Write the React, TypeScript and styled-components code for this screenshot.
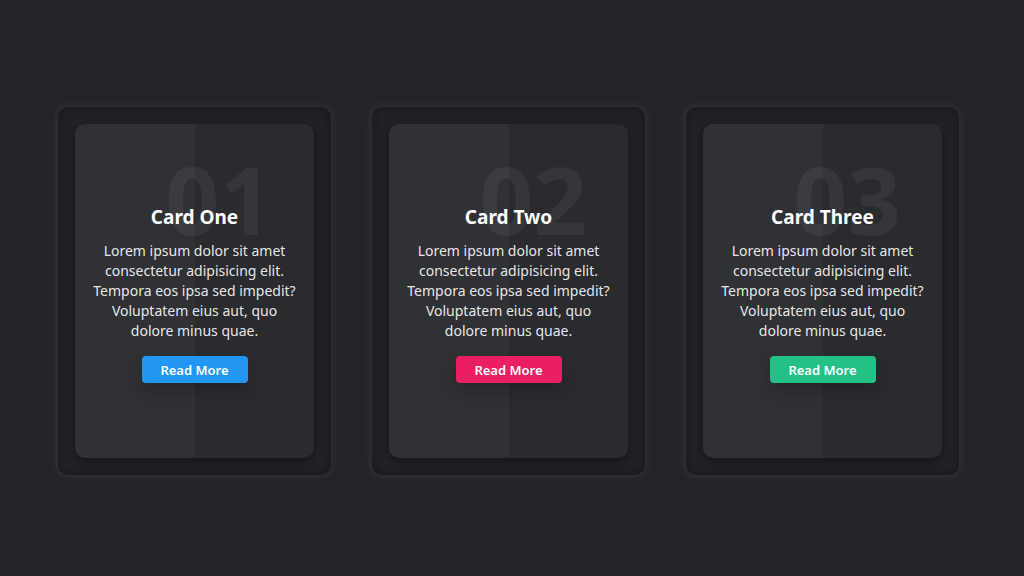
import React from 'react'
import styled, { createGlobalStyle } from 'styled-components'

const GlobalStyle = createGlobalStyle`
  * { box-sizing: border-box; margin: 0; padding: 0; }
  html, body { background: #232427; }
  body { font-family: "Noto Sans", "Open Sans", sans-serif; }
`

const Page = styled.div`
  width: 1024px;
  height: 576px;
  display: flex;
  align-items: flex-start;
  gap: 39px;
  padding: 106px 0 0 57px;
  background: #232427;
`

const Card = styled.div`
  position: relative;
  width: 275px;
  height: 370px;
  padding: 18px;
  border-radius: 11px;
  border: 1px solid rgba(255, 255, 255, 0.05);
  background: #222326;
  box-shadow:
    inset 0 0 14px rgba(0, 0, 0, 0.35),
    0 0 9px rgba(255, 255, 255, 0.08);
`

const Box = styled.div`
  position: relative;
  height: calc(100% + 2px);
  margin: -1px;
  background: #2a2b2f;
  border-radius: 10px;
  display: flex;
  align-items: center;
  justify-content: center;
  overflow: hidden;
  box-shadow: 0 3px 10px rgba(0, 0, 0, 0.45);

  &::before {
    content: '';
    position: absolute;
    top: 0;
    left: 0;
    width: 50%;
    height: 100%;
    background: rgba(255, 255, 255, 0.03);
    pointer-events: none;
  }
`

const Content = styled.div`
  position: relative;
  width: 100%;
  padding: 5px 14px 0;
  text-align: center;
  display: flex;
  flex-direction: column;
  align-items: center;
`

const Number = styled.span`
  position: absolute;
  top: -47px;
  right: 41px;
  font-size: 94px;
  font-weight: 700;
  line-height: 1;
  color: rgba(255, 255, 255, 0.055);
`

const Title = styled.h3`
  position: relative;
  font-size: 19px;
  font-weight: 700;
  line-height: 26px;
  color: #fff;
  margin-bottom: 11px;
`

const Text = styled.p`
  position: relative;
  font-size: 14px;
  font-weight: 400;
  line-height: 20px;
  color: rgba(255, 255, 255, 0.9);
`

const Button = styled.a<{ $color: string }>`
  position: relative;
  display: inline-flex;
  align-items: center;
  justify-content: center;
  width: 106px;
  height: 27px;
  margin-top: 15px;
  border-radius: 4px;
  background: ${p => p.$color};
  color: #fff;
  font-size: 13px;
  font-weight: 600;
  text-decoration: none;
  box-shadow: 0 8px 16px rgba(0, 0, 0, 0.2);
`

const cards = [
  { num: '01', title: 'Card One', color: '#2196f3' },
  { num: '02', title: 'Card Two', color: '#e91e63' },
  { num: '03', title: 'Card Three', color: '#23c186' },
]

export default function App() {
  return (
    <>
      <GlobalStyle />
      <Page>
        {cards.map(c => (
          <Card key={c.num}>
            <Box>
              <Content>
                <Number>{c.num}</Number>
                <Title>{c.title}</Title>
                <Text>
                  Lorem ipsum dolor sit amet consectetur adipisicing elit. Tempora eos ipsa sed
                  impedit? Voluptatem eius aut, quo dolore minus quae.
                </Text>
                <Button href="#" $color={c.color}>Read More</Button>
              </Content>
            </Box>
          </Card>
        ))}
      </Page>
    </>
  )
}
